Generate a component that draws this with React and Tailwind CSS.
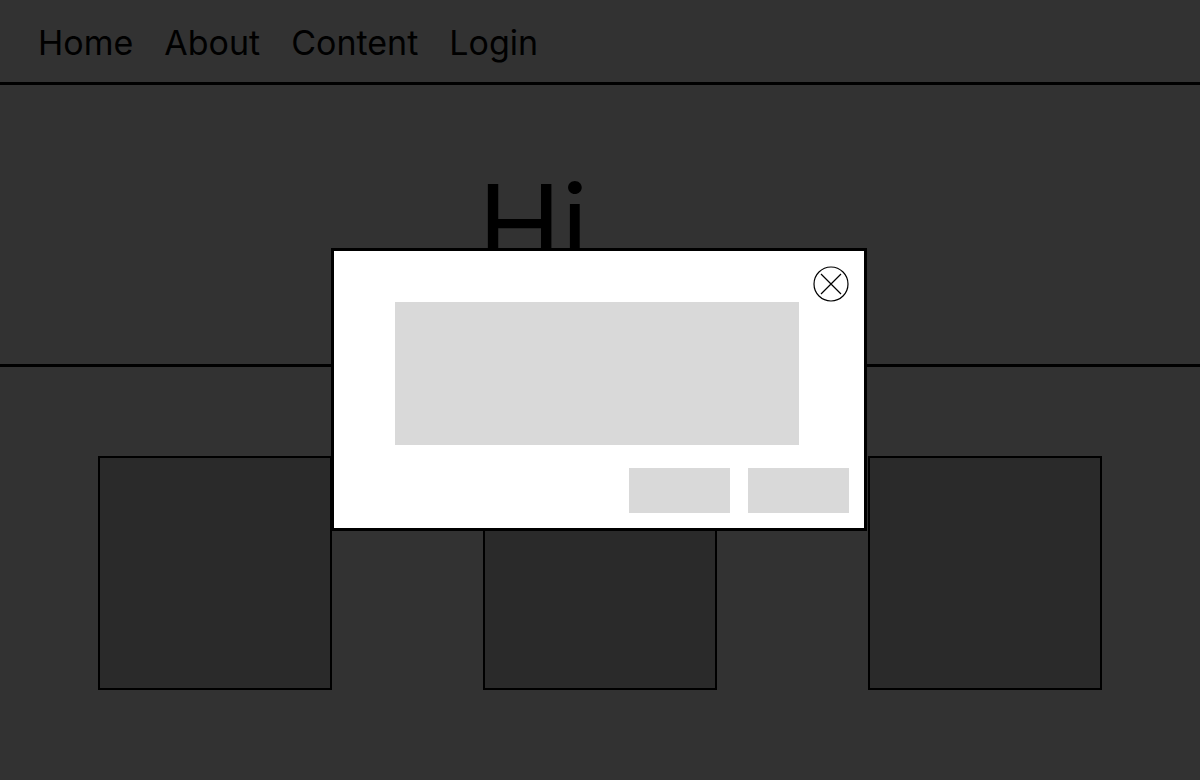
import { useState } from "react";

function CloseIcon() {
  return (
    <svg width="36" height="36" viewBox="0 0 36 36" fill="none">
      <circle cx="18" cy="18" r="17" stroke="black" strokeWidth="1.2" />
      <path d="M8 8L28 28M28 8L8 28" stroke="black" strokeWidth="1.2" />
    </svg>
  );
}

function App() {
  const [open, setOpen] = useState(true);

  return (
    <div
      className="relative w-full h-[780px] overflow-hidden bg-[#323232] text-black"
      style={{ fontFamily: "Inter, 'Noto Sans', sans-serif" }}
    >
      {/* Nav */}
      <nav className="h-[85px] flex items-start gap-[31px] pl-[38px] pt-[26px] border-b-[3px] border-black text-[34px] leading-none">
        {["Home", "About", "Content", "Login"].map((item) => (
          <a key={item} href="#" className="text-black">
            {item}
          </a>
        ))}
      </nav>

      {/* Hero */}
      <section className="h-[282px] pl-[478px] pt-[83px] border-b-[3px] border-black">
        <h1 className="text-[112px] leading-none font-normal">Hi</h1>
      </section>

      {/* Cards */}
      <section className="flex justify-center gap-[151px] pt-[89px]">
        {[1, 2, 3].map((n) => (
          <div
            key={n}
            className="w-[234px] h-[234px] bg-[#2a2a2a] border-2 border-black"
          />
        ))}
      </section>

      {/* Modal */}
      {open && (
        <div className="absolute left-[331px] top-[248px] w-[536px] h-[283px] bg-white border-[3px] border-black flex flex-col">
          <div className="flex justify-end pt-[15px] pr-[15px]">
            <button onClick={() => setOpen(false)} className="w-9 h-9">
              <CloseIcon />
            </button>
          </div>
          <div className="ml-[61px] w-[404px] h-[143px] bg-[#d9d9d9]" />
          <div className="flex justify-end gap-[18px] pr-[15px] mt-[23px]">
            <button className="w-[101px] h-[45px] bg-[#d9d9d9]" />
            <button className="w-[101px] h-[45px] bg-[#d9d9d9]" />
          </div>
        </div>
      )}
    </div>
  );
}

export default App;
